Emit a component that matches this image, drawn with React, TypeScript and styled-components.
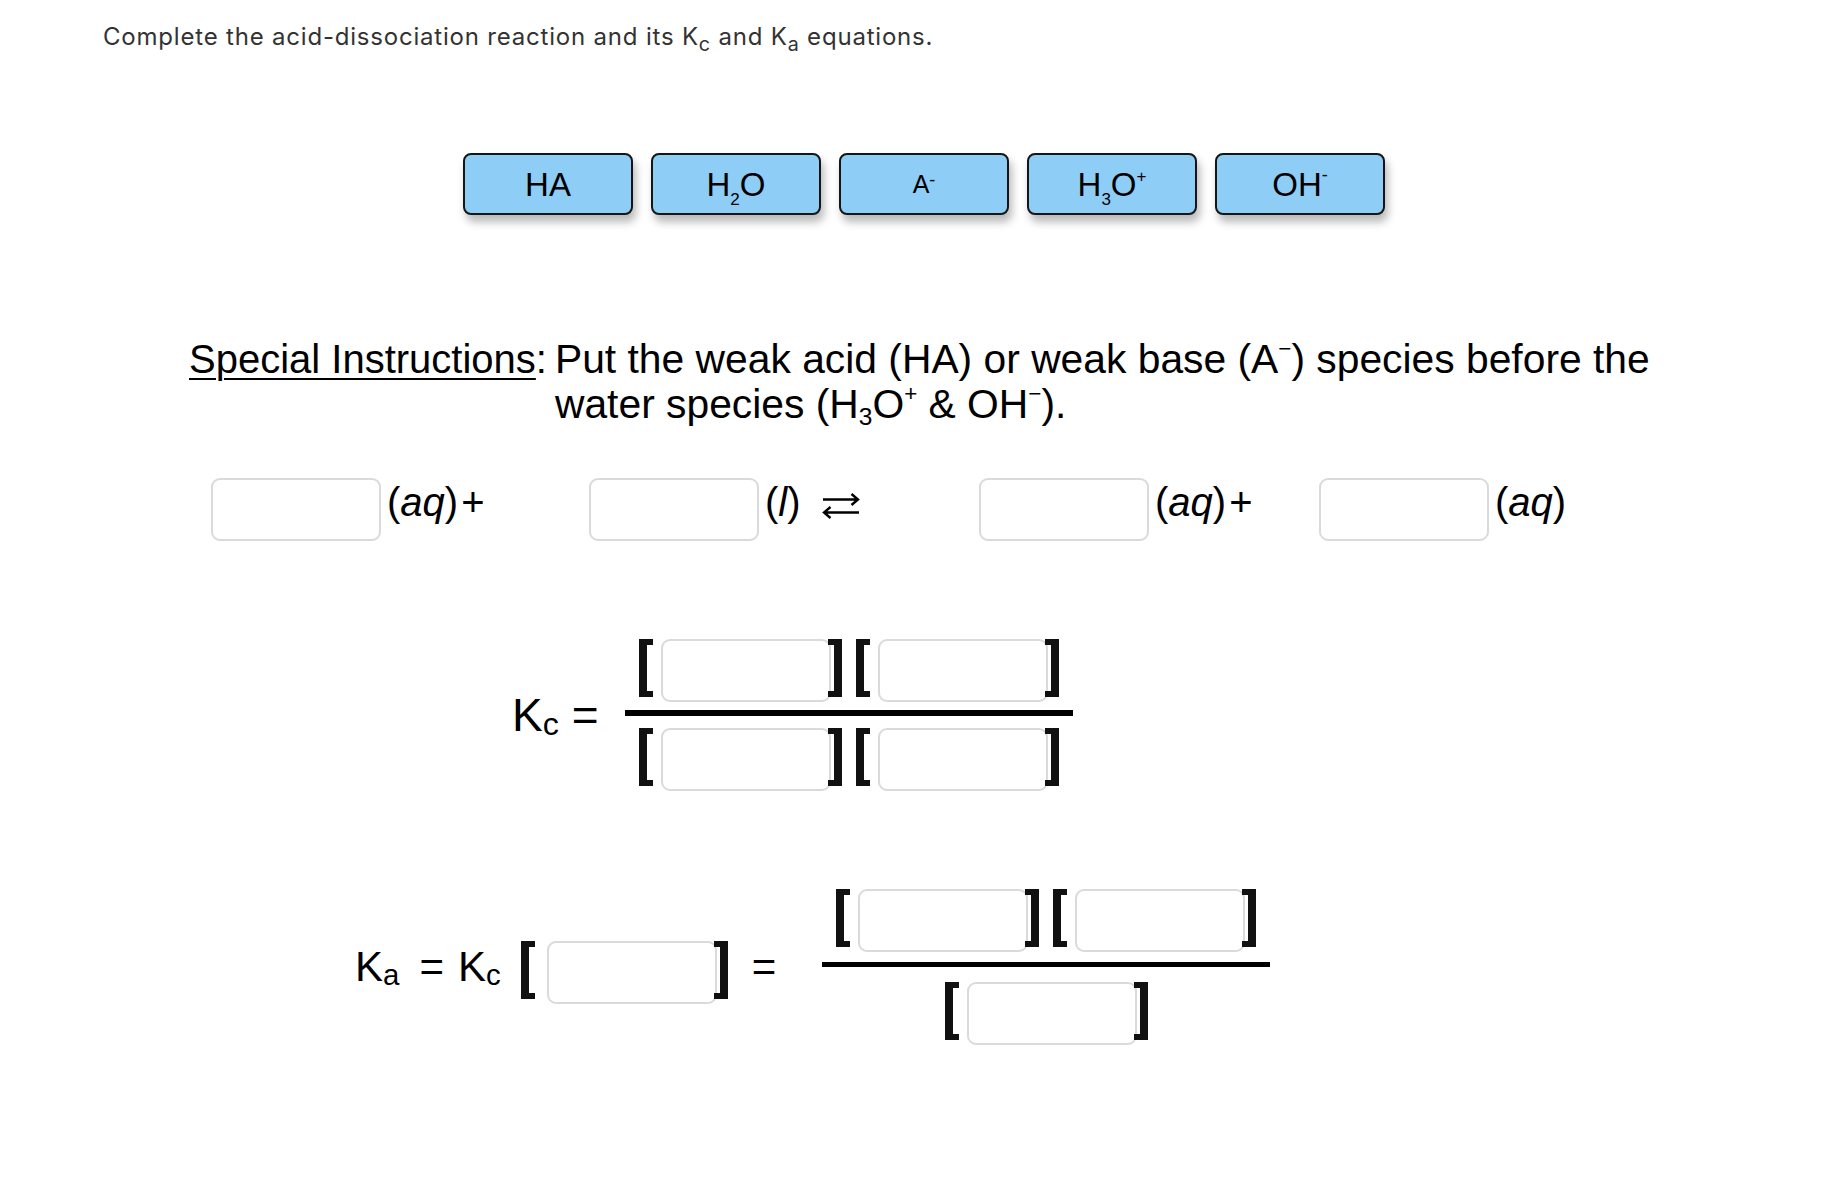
import React from 'react';
import styled, { createGlobalStyle } from 'styled-components';

const GlobalStyle = createGlobalStyle`
  html, body {
    margin: 0;
    padding: 0;
    background: #ffffff;
  }
  body {
    font-family: "Liberation Sans", Arial, sans-serif;
    color: #000;
  }
`;

const Page = styled.main`
  width: 1848px;
  height: 1188px;
  overflow: hidden;
  display: flex;
  flex-direction: column;
  align-items: flex-start;
`;

const Prompt = styled.p`
  margin: 22px 0 0 103px;
  font-family: Inter, Lato, sans-serif;
  font-size: 24px;
  letter-spacing: 0.8px;
  line-height: 30px;
  color: #333;
`;

const PromptSub = styled.span`
  font-size: 0.82em;
  line-height: 0;
  position: relative;
  top: 0.28em;
`;

const Tray = styled.div`
  align-self: center;
  margin-top: 101px;
  display: flex;
  gap: 18px;
`;

const Chip = styled.button<{ $size?: number }>`
  width: 170px;
  height: 62px;
  box-sizing: border-box;
  padding: 0;
  border: 2px solid #161616;
  border-radius: 8px;
  background: #8ecdf6;
  box-shadow: 3px 7px 8px rgba(0, 0, 0, 0.28);
  display: flex;
  align-items: center;
  justify-content: center;
  font-family: "Liberation Sans", Arial, sans-serif;
  font-size: ${({ $size }) => $size ?? 33}px;
  line-height: 1;
  color: #000;
`;

const ChipSub = styled.span`
  font-size: 17px;
  position: relative;
  top: 15px;
`;

const ChipSup = styled.span<{ $lift: number; $size: number }>`
  font-size: ${({ $size }) => $size}px;
  position: relative;
  top: -${({ $lift }) => $lift}px;
`;

const Notice = styled.div`
  margin: 122px 0 0 189px;
  display: flex;
  font-size: 40px;
  line-height: 45px;
`;

const NoticeLabel = styled.span`
  margin-right: 8px;
`;

const Underlined = styled.span`
  text-decoration: underline;
  text-decoration-thickness: 2px;
  text-underline-offset: 5px;
`;

const NoticeBody = styled.span`
  display: block;
  font-size: 40.8px;
`;

const Sub = styled.span`
  font-size: 0.6em;
  line-height: 0;
  position: relative;
  top: 0.3em;
`;

const Sup = styled.span`
  font-size: 0.55em;
  line-height: 0;
  position: relative;
  top: -0.75em;
`;

const Reaction = styled.div`
  margin: 51px 0 0 211px;
  display: grid;
  grid-template-columns: 378px 390px 340px auto;
  align-items: center;
`;

const Term = styled.div`
  display: flex;
  align-items: flex-start;
`;

const Blank = styled.div`
  flex: none;
  width: 170px;
  height: 63px;
  box-sizing: border-box;
  border: 2px solid #dadada;
  border-radius: 9px;
  background: #fff;
`;

const State = styled.span`
  margin: 1px 0 0 6px;
  font-size: 40px;
  line-height: 46px;
  white-space: pre;
`;

const Plus = styled.span`
  margin-left: 3px;
`;

const Arrow = styled.svg`
  margin-left: 20px;
  vertical-align: -3px;
`;

const EquationRow = styled.div<{ $top: number; $indent: number }>`
  margin: ${({ $top }) => $top}px 0 0 ${({ $indent }) => $indent}px;
  display: flex;
  align-items: center;
`;

const Symbol = styled.span<{ $size: number; $lead?: number }>`
  margin-left: ${({ $lead }) => $lead ?? 0}px;
  font-size: ${({ $size }) => $size}px;
  line-height: 1.15;
  white-space: pre;
`;

const KSub = styled.span`
  font-size: 0.7em;
  line-height: 0;
  position: relative;
  top: 0.14em;
`;

const Fraction = styled.div<{ $lead: number }>`
  margin-left: ${({ $lead }) => $lead}px;
  width: 448px;
  display: flex;
  flex-direction: column;
  align-items: center;
`;

const Bar = styled.div<{ $thick: number; $above: number; $below: number }>`
  align-self: stretch;
  height: ${({ $thick }) => $thick}px;
  margin: ${({ $above }) => $above}px 0 ${({ $below }) => $below}px;
  background: #000;
`;

const Product = styled.div`
  display: flex;
  align-items: flex-start;
  gap: 14px;
`;

const Bracketed = styled.div<{ $lead?: number; $drop?: number }>`
  margin-left: ${({ $lead }) => $lead ?? 0}px;
  margin-top: ${({ $drop }) => $drop ?? 0}px;
  display: flex;
  align-items: flex-start;
`;

const Bracket = styled.span<{ $side: 'open' | 'close'; $inset?: number }>`
  flex: none;
  box-sizing: border-box;
  width: 14px;
  height: 58px;
  border-style: solid;
  border-color: #111;
  border-width: ${({ $side }) => ($side === 'open' ? '6px 0 6px 8px' : '6px 8px 6px 0')};
  margin-left: ${({ $side }) => ($side === 'open' ? '0' : '-3px')};
  margin-right: ${({ $side, $inset }) => ($side === 'open' ? `${$inset ?? 8}px` : '0')};
`;

const Concentration: React.FC<{ lead?: number; drop?: number; inset?: number }> = ({
  lead,
  drop,
  inset,
}) => (
  <Bracketed $lead={lead} $drop={drop}>
    <Bracket $side="open" $inset={inset} />
    <Blank />
    <Bracket $side="close" />
  </Bracketed>
);

const Equilibrium = () => (
  <Arrow width="40" height="26" viewBox="0 0 40 26">
    <path d="M2 6.5H37M30.5 1L37 6.5L30.5 12" stroke="#000" strokeWidth="2.4" fill="none" />
    <path d="M38 19.5H3M9.5 14L3 19.5L9.5 25" stroke="#000" strokeWidth="2.4" fill="none" />
  </Arrow>
);

export default function App() {
  return (
    <Page>
      <GlobalStyle />
      <Prompt>
        Complete the acid-dissociation reaction and its K<PromptSub>c</PromptSub> and K
        <PromptSub>a</PromptSub> equations.
      </Prompt>

      <Tray>
        <Chip>HA</Chip>
        <Chip>
          H<ChipSub>2</ChipSub>O
        </Chip>
        <Chip $size={25}>
          A<ChipSup $size={18} $lift={4}>-</ChipSup>
        </Chip>
        <Chip>
          H<ChipSub>3</ChipSub>O<ChipSup $size={17} $lift={8}>+</ChipSup>
        </Chip>
        <Chip>
          OH<ChipSup $size={18} $lift={9}>-</ChipSup>
        </Chip>
      </Tray>

      <Notice>
        <NoticeLabel>
          <Underlined>Special Instructions</Underlined>:
        </NoticeLabel>
        <NoticeBody>
          Put the weak acid (HA) or weak base (A<Sup>−</Sup>) species before the
          <br />
          water species (H<Sub>3</Sub>O<Sup>+</Sup> &amp; OH<Sup>−</Sup>).
        </NoticeBody>
      </Notice>

      <Reaction>
        <Term>
          <Blank />
          <State>
            (<i>aq</i>)<Plus>+</Plus>
          </State>
        </Term>
        <Term>
          <Blank />
          <State>
            (<i>l</i>)
            <Equilibrium />
          </State>
        </Term>
        <Term>
          <Blank />
          <State>
            (<i>aq</i>)<Plus>+</Plus>
          </State>
        </Term>
        <Term>
          <Blank />
          <State>
            (<i>aq</i>)
          </State>
        </Term>
      </Reaction>

      <EquationRow $top={98} $indent={512}>
        <Symbol $size={46}>
          K<KSub>c</KSub>
        </Symbol>
        <Symbol $size={46} $lead={13}>
          =
        </Symbol>
        <Fraction $lead={26}>
          <Product>
            <Concentration />
            <Concentration />
          </Product>
          <Bar $thick={6} $above={8} $below={12} />
          <Product>
            <Concentration />
            <Concentration />
          </Product>
        </Fraction>
      </EquationRow>

      <EquationRow $top={98} $indent={355}>
        <Symbol $size={42}>
          K<KSub>a</KSub>
        </Symbol>
        <Symbol $size={42} $lead={20}>
          =
        </Symbol>
        <Symbol $size={42} $lead={14}>
          K<KSub>c</KSub>
        </Symbol>
        <Concentration lead={20} drop={10} inset={12} />
        <Symbol $size={42} $lead={24}>
          =
        </Symbol>
        <Fraction $lead={46}>
          <Product>
            <Concentration />
            <Concentration />
          </Product>
          <Bar $thick={5} $above={10} $below={15} />
          <Product>
            <Concentration />
          </Product>
        </Fraction>
      </EquationRow>
    </Page>
  );
}
